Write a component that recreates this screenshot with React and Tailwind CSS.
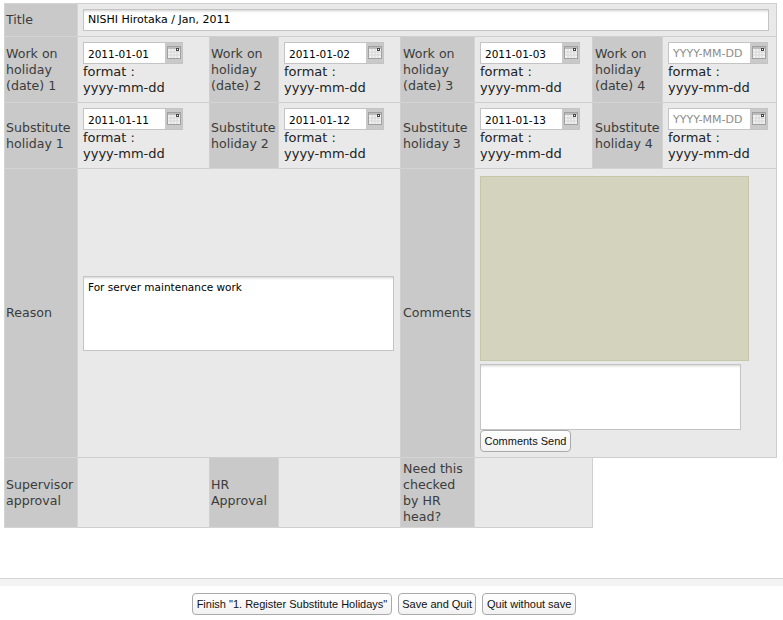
const labelCls = 'bg-[#c9c9c9] border border-[#d4d4d4] pr-0 py-0 align-middle text-[#3c3c3c] font-normal text-left text-[12.6px]'
const valueCls = 'bg-[#e9e9e9] border border-[#cfcfcf] pl-[5px] pr-0 py-0 align-top'
const inputShadow = 'shadow-[inset_0_3px_3px_-2px_#d0d0d0]'
const labelPad = ['pl-[1px]', 'pl-[1px]', 'pl-[2px]', 'pl-[2px]']

const CalendarIcon = () => (
  <svg width="14" height="13" viewBox="0 0 14 13" className="block">
    <rect x="0.5" y="0.5" width="13" height="12" fill="#f2f2f2" stroke="#a0a0a0" />
    <rect x="1" y="1" width="12" height="2" fill="#bcbcbc" />
    <path d="M1 6h12M1 9h12M4 3v9M7 3v9M10 3v9" stroke="#d6d6d6" strokeWidth="1" />
    <rect x="9.5" y="2.5" width="2" height="2" fill="#fff" stroke="#444" strokeWidth="1" />
  </svg>
)

const DateField = ({ value }) => (
  <div>
    <div className="flex w-[100px] mt-[5px]">
      <div className={`flex-1 h-[22px] bg-white border border-[#c4c4c4] border-r-0 pl-[4px] leading-[22px] ${value ? 'text-[10.5px] text-black' : 'text-[11px] text-[#8c8c8c]'}`}>
        {value || 'YYYY-MM-DD'}
      </div>
      <div className="w-[18px] h-[22px] bg-[#c9c9c9] border border-[#c4c4c4] border-l-0 flex items-start justify-center pt-[3px]">
        <CalendarIcon />
      </div>
    </div>
    <div className="text-[#222] leading-[16px]">format :</div>
    <div className="text-[#222] leading-[16px] pb-[2px]">yyyy-mm-dd</div>
  </div>
)

const AppButton = ({ children }) => (
  <button className="h-[22px] px-[3.5px] bg-gradient-to-b from-white to-[#f1f1f1] border border-[#aaa] rounded-[4px] text-[11px] text-[#111] font-['Liberation_Sans',sans-serif] whitespace-nowrap">
    {children}
  </button>
)

const work = ['2011-01-01', '2011-01-02', '2011-01-03', '']
const subs = ['2011-01-11', '2011-01-12', '2011-01-13', '']

export default function App() {
  return (
    <div className="w-[783px] h-[620px] bg-white overflow-hidden font-['DejaVu_Sans',sans-serif] text-[13px] leading-[16px]">
      <div className="pt-[3px] pl-[4px]">
        <table className="table-fixed border-collapse w-[772px]">
          <colgroup>
            <col className="w-[73px]" />
            <col className="w-[132px]" />
            <col className="w-[69px]" />
            <col className="w-[122px]" />
            <col className="w-[74px]" />
            <col className="w-[118px]" />
            <col className="w-[70px]" />
            <col className="w-[114px]" />
          </colgroup>
          <tbody>
            <tr className="h-[33px]">
              <th className={`${labelCls} pl-[1px]`}>Title</th>
              <td colSpan={7} className="bg-[#e9e9e9] border border-[#cfcfcf] pl-[5px] pr-[7px] align-middle">
                <div className={`h-[22px] bg-white border border-[#c4c4c4] pl-[4px] leading-[20px] text-[11px] text-black ${inputShadow}`}>
                  NISHI Hirotaka / Jan, 2011
                </div>
              </td>
            </tr>
            <tr className="h-[66px]">
              {work.map((v, i) => [
                <th key={`l${i}`} className={`${labelCls} ${labelPad[i]}`}>Work on holiday (date) {i + 1}</th>,
                <td key={`v${i}`} className={valueCls}><DateField value={v} /></td>,
              ])}
            </tr>
            <tr className="h-[66px]">
              {subs.map((v, i) => [
                <th key={`l${i}`} className={`${labelCls} ${labelPad[i]}`}>Substitute holiday {i + 1}</th>,
                <td key={`v${i}`} className={valueCls}><DateField value={v} /></td>,
              ])}
            </tr>
            <tr className="h-[289px]">
              <th className={`${labelCls} pl-[1px]`}>Reason</th>
              <td colSpan={3} className="bg-[#e9e9e9] border border-[#cfcfcf] pl-[5px] pr-[6px] align-middle">
                <div className={`h-[75px] w-[311px] bg-white border border-[#c4c4c4] pl-[4px] pt-[2px] text-[10.5px] leading-[16px] text-black ${inputShadow}`}>
                  For server maintenance work
                </div>
              </td>
              <th className={`${labelCls} pl-[2px]`}>Comments</th>
              <td colSpan={3} className="bg-[#e9e9e9] border border-[#cfcfcf] pl-[5px] align-top">
                <div className="w-[269px] h-[185px] mt-[7px] bg-[#d4d3bd] border border-[#c6c6a8]" />
                <div className={`w-[261px] h-[66px] mt-[3px] bg-white border border-[#c4c4c4] ${inputShadow}`} />
                <div className="mb-[5px] flex">
                  <AppButton>Comments Send</AppButton>
                </div>
              </td>
            </tr>
            <tr className="h-[70px]">
              <th className={`${labelCls} pl-[1px]`}>Supervisor approval</th>
              <td className={valueCls} />
              <th className={`${labelCls} pl-[1px]`}>HR Approval</th>
              <td className={valueCls} />
              <th className={`${labelCls} pl-[2px] text-[#3a2a2a]`}>Need this checked by HR head?</th>
              <td className={valueCls} />
              <td colSpan={2} className="bg-white" />
            </tr>
          </tbody>
        </table>
      </div>
      <div className="mt-[50px] h-[8px] border-t border-[#d6d6d6] bg-[#f3f3f3]" />
      <div className="flex justify-center gap-[6px] pt-[7px] pr-[15px]">
        <AppButton>Finish "1. Register Substitute Holidays"</AppButton>
        <AppButton>Save and Quit</AppButton>
        <AppButton>Quit without save</AppButton>
      </div>
    </div>
  )
}
